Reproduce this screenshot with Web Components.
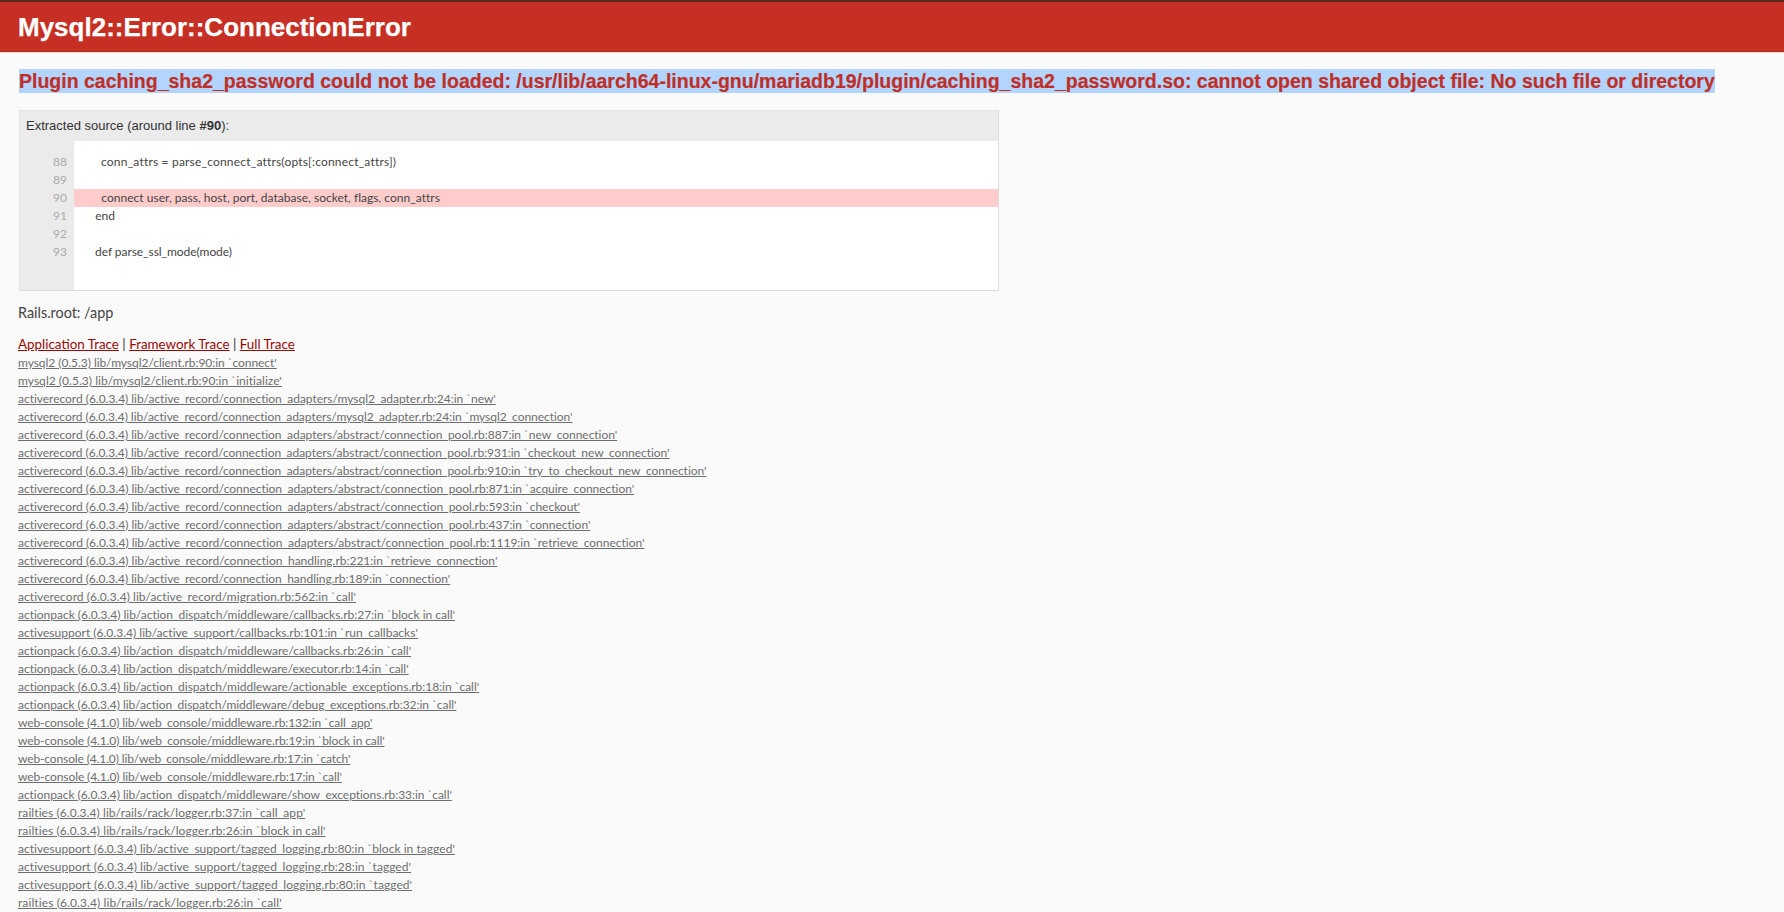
<!DOCTYPE html>
<html><head><meta charset="utf-8"><title>Action Controller: Exception caught</title>
<style>
html,body{margin:0;height:912px;overflow:hidden;background:#fafafa}
body{font-family:Lato,"Noto Sans",sans-serif;color:#333;display:flex;flex-direction:column}
</style></head><body>
<error-header>Mysql2::Error::ConnectionError</error-header>
<main-content>
  <error-message>Plugin caching_sha2_password could not be loaded: /usr/lib/aarch64-linux-gnu/mariadb19/plugin/caching_sha2_password.so: cannot open shared object file: No such file or directory</error-message>
  <source-box line="90"></source-box>
  <rails-root>Rails.root: /app</rails-root>
  <trace-view></trace-view>
</main-content>
<script>
function el(name,css,html,build){
  customElements.define(name,class extends HTMLElement{
    connectedCallback(){
      if(this.shadowRoot)return;
      const s=this.attachShadow({mode:'open'});
      s.innerHTML='<style>'+css+'</style>'+html;
      if(build)build(s,this);
    }
  });
}
el('error-header',`:host{display:block;box-sizing:border-box;height:52px;background:#c52f24;border-top:2px solid #5e2620;border-bottom:1px solid #b3261c;box-shadow:0 1px 0 #f3d9d3;color:#fff}
h1{margin:0;padding:0 18px;font:bold 26px/51px "Liberation Sans",Arial,sans-serif;-webkit-text-stroke:.25px #fff}`,'<h1><slot></slot></h1>');
el('main-content',`:host{display:block;padding:17px 18px 0}`,'<slot></slot>');
el('error-message',`:host{display:block;height:24px;white-space:nowrap;margin-left:1px}
h2{margin:0;font:bold 19.5px/24px "Liberation Sans",Arial,sans-serif;color:#bf2f28;-webkit-text-stroke:.2px #bf2f28}
span{background:#b3d4fc;display:inline-block}`,'<h2><span><slot></slot></span></h2>');
const code=[['88','    conn_attrs = parse_connect_attrs(opts[:connect_attrs])',0,.19],['89',''],['90','    connect user, pass, host, port, database, socket, flags, conn_attrs',1,.02],['91','  end'],['92',''],['93','  def parse_ssl_mode(mode)',0,-.06]];
el('source-box',`:host{display:block;box-sizing:border-box;width:980px;height:181px;margin:17px 0 0 1px;border:1px solid #dcdcdc;border-top-color:#e4e4e4;border-left-color:#e4e4e4;background:#fff;display:flex;flex-direction:column}
header{height:30px;flex:none;background:#ebebeb;box-sizing:border-box;padding:0 6px;font:13px/30px "Liberation Sans",Arial,sans-serif;color:#333}
.b{flex:1;display:grid;grid-template-columns:54px 1fr;min-height:0}
.g{background:#ebebeb;padding-top:12px;text-align:right;color:#aaa}
.g div{height:18px;line-height:18px;padding-right:7px;font-size:12px}
.c{padding-top:12px;min-width:0}
.c div{height:18px;line-height:18px;padding-left:15px;font-size:12px;white-space:pre;color:#444}
.c div.s{padding-left:14px}
.c .h{background:#fcc}`,`<header>Extracted source (around line <b>#90</b>):</header><div class="b"><div class="g"></div><div class="c"></div></div>`,(s)=>{
  const g=s.querySelector('.g'),c=s.querySelector('.c');
  code.forEach(l=>{const a=document.createElement('div');a.textContent=l[0];g.append(a);const b=document.createElement('div');b.textContent=l[1];if(l[2])b.className='h';if(l[0]==='88')b.className='s';if(l[3])b.style.letterSpacing=l[3]+'px';c.append(b);});
});
el('rails-root',`:host{display:block;margin-top:13px;font-size:14.4px;line-height:18px;color:#444}`,'<slot></slot>');
const tr=`mysql2 (0.5.3) lib/mysql2/client.rb:90:in \`connect'
mysql2 (0.5.3) lib/mysql2/client.rb:90:in \`initialize'
activerecord (6.0.3.4) lib/active_record/connection_adapters/mysql2_adapter.rb:24:in \`new'
activerecord (6.0.3.4) lib/active_record/connection_adapters/mysql2_adapter.rb:24:in \`mysql2_connection'
activerecord (6.0.3.4) lib/active_record/connection_adapters/abstract/connection_pool.rb:887:in \`new_connection'
activerecord (6.0.3.4) lib/active_record/connection_adapters/abstract/connection_pool.rb:931:in \`checkout_new_connection'
activerecord (6.0.3.4) lib/active_record/connection_adapters/abstract/connection_pool.rb:910:in \`try_to_checkout_new_connection'
activerecord (6.0.3.4) lib/active_record/connection_adapters/abstract/connection_pool.rb:871:in \`acquire_connection'
activerecord (6.0.3.4) lib/active_record/connection_adapters/abstract/connection_pool.rb:593:in \`checkout'
activerecord (6.0.3.4) lib/active_record/connection_adapters/abstract/connection_pool.rb:437:in \`connection'
activerecord (6.0.3.4) lib/active_record/connection_adapters/abstract/connection_pool.rb:1119:in \`retrieve_connection'
activerecord (6.0.3.4) lib/active_record/connection_handling.rb:221:in \`retrieve_connection'
activerecord (6.0.3.4) lib/active_record/connection_handling.rb:189:in \`connection'
activerecord (6.0.3.4) lib/active_record/migration.rb:562:in \`call'
actionpack (6.0.3.4) lib/action_dispatch/middleware/callbacks.rb:27:in \`block in call'
activesupport (6.0.3.4) lib/active_support/callbacks.rb:101:in \`run_callbacks'
actionpack (6.0.3.4) lib/action_dispatch/middleware/callbacks.rb:26:in \`call'
actionpack (6.0.3.4) lib/action_dispatch/middleware/executor.rb:14:in \`call'
actionpack (6.0.3.4) lib/action_dispatch/middleware/actionable_exceptions.rb:18:in \`call'
actionpack (6.0.3.4) lib/action_dispatch/middleware/debug_exceptions.rb:32:in \`call'
web-console (4.1.0) lib/web_console/middleware.rb:132:in \`call_app'
web-console (4.1.0) lib/web_console/middleware.rb:19:in \`block in call'
web-console (4.1.0) lib/web_console/middleware.rb:17:in \`catch'
web-console (4.1.0) lib/web_console/middleware.rb:17:in \`call'
actionpack (6.0.3.4) lib/action_dispatch/middleware/show_exceptions.rb:33:in \`call'
railties (6.0.3.4) lib/rails/rack/logger.rb:37:in \`call_app'
railties (6.0.3.4) lib/rails/rack/logger.rb:26:in \`block in call'
activesupport (6.0.3.4) lib/active_support/tagged_logging.rb:80:in \`block in tagged'
activesupport (6.0.3.4) lib/active_support/tagged_logging.rb:28:in \`tagged'
activesupport (6.0.3.4) lib/active_support/tagged_logging.rb:80:in \`tagged'
railties (6.0.3.4) lib/rails/rack/logger.rb:26:in \`call'`.split('\n');
const delta=[-2,2,-2,-4,-3,-4,-4,-2,-2,-2,-1,-1,-2,3,-1,1,-1,-2,-2,-3,-6,-6,-7,-5,-3,4,5,3,3,4,5];
el('trace-view',`:host{display:block;margin-top:13px}
.t{font-size:13.4px;line-height:18px;color:#333;margin-bottom:1px}
.t a{color:#980905;text-decoration:underline}
.l{font-size:12px;line-height:18px}
.l a{display:block;width:max-content;color:#6e6e6e;text-decoration:underline;white-space:nowrap}`,`<div class="t"><a href="#">Application Trace</a> | <a href="#">Framework Trace</a> | <a href="#">Full Trace</a></div><div class="l"></div>`,(s)=>{
  const l=s.querySelector('.l');
  tr.forEach((t,i)=>{const a=document.createElement('a');a.href='#';a.textContent=t;a.style.letterSpacing=(delta[i]*1.138/t.length).toFixed(3)+'px';l.append(a);});
});
</script>
</body></html>
